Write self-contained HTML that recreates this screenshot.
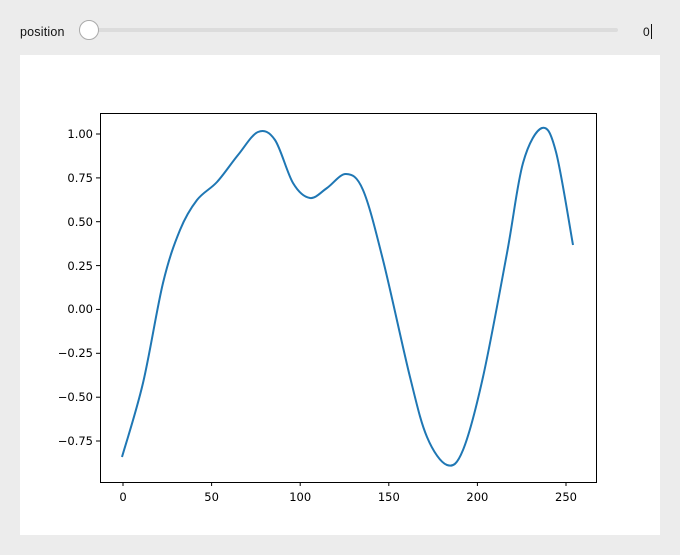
<!DOCTYPE html>
<html><head><style>
body{margin:0;width:680px;height:555px;background:#ececec;font-family:"Liberation Sans",sans-serif;position:relative;overflow:hidden}
.lbl{position:absolute;left:20px;top:25px;font-size:12.5px;color:#111;letter-spacing:0.2px}
.track{position:absolute;left:88px;top:28px;width:530px;height:4px;background:#dcdcdc;border-radius:2px}
.knob{position:absolute;left:79px;top:20px;width:20px;height:20px;border-radius:50%;background:#fff;border:1px solid #aaa;box-sizing:border-box}
.val{position:absolute;left:643px;top:25px;font-size:12px;color:#111}
.cur{position:absolute;left:651px;top:24px;width:1px;height:15px;background:#111}
.panel{position:absolute;left:20px;top:55px;width:640px;height:480px;background:#fff}
svg{position:absolute;left:0;top:0}
text{font-family:"DejaVu Sans",sans-serif;font-size:11.5px;fill:#000}
</style></head><body>
<div class="lbl">position</div><div class="track"></div><div class="knob"></div>
<div class="val">0</div><div class="cur"></div>
<div class="panel"></div>
<svg width="680" height="555" id="s">
<rect x="100.5" y="113.5" width="496" height="369" fill="none" stroke="#000" stroke-width="1"/>
<g stroke="#000" stroke-width="1">
<line x1="123" y1="482" x2="123" y2="486"/><line x1="211.6" y1="482" x2="211.6" y2="486"/>
<line x1="300.2" y1="482" x2="300.2" y2="486"/><line x1="388.8" y1="482" x2="388.8" y2="486"/>
<line x1="477.4" y1="482" x2="477.4" y2="486"/><line x1="566" y1="482" x2="566" y2="486"/>
<line x1="96" y1="134" x2="100" y2="134"/><line x1="96" y1="177.9" x2="100" y2="177.9"/>
<line x1="96" y1="221.7" x2="100" y2="221.7"/><line x1="96" y1="265.6" x2="100" y2="265.6"/>
<line x1="96" y1="309.4" x2="100" y2="309.4"/><line x1="96" y1="353.3" x2="100" y2="353.3"/>
<line x1="96" y1="397.2" x2="100" y2="397.2"/><line x1="96" y1="441" x2="100" y2="441"/>
</g>
<g text-anchor="middle">
<text x="123" y="501">0</text><text x="211.6" y="501">50</text><text x="300.2" y="501">100</text>
<text x="388.8" y="501">150</text><text x="477.4" y="501">200</text><text x="566" y="501">250</text>
</g>
<g text-anchor="end">
<text x="93" y="138">1.00</text><text x="93" y="182">0.75</text><text x="93" y="226">0.50</text>
<text x="93" y="270">0.25</text><text x="93" y="313">0.00</text><text x="93" y="357">−0.25</text>
<text x="93" y="401">−0.50</text><text x="93" y="445">−0.75</text>
</g>
<path id="c" fill="none" stroke="#1f77b4" stroke-width="2" stroke-linejoin="round"/>
</svg>
<script>
var p=[[122,457],[143,383],[163,283],[180,230],[197,200],[217,182],[238,155],[258,132],[275,140],[293,183],[310,198],[327,188],[346,174],[363,190],[383,260],[410,377],[427,437],[447,465],[463,450],[483,377],[507,253],[523,163],[542,128],[556,152],[573,245]];
var d="M"+p[0];for(var i=0;i<p.length-1;i++){var a=p[i-1]||p[i],b=p[i],c=p[i+1],e=p[i+2]||c;
d+=" C"+(b[0]+(c[0]-a[0])/6)+","+(b[1]+(c[1]-a[1])/6)+" "+(c[0]-(e[0]-b[0])/6)+","+(c[1]-(e[1]-b[1])/6)+" "+c[0]+","+c[1];}
document.getElementById("c").setAttribute("d",d);
</script>
</body></html>
